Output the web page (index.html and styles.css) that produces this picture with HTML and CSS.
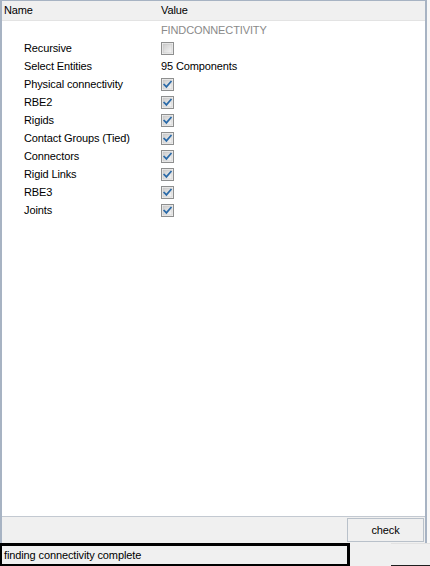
FILE: index.html
```html
<!DOCTYPE html>
<html lang="en">
<head>
    <meta charset="UTF-8">
    <title>Find Connectivity</title>
    <link rel="stylesheet" href="styles.css">
</head>
<body>
<svg class="defs" width="0" height="0">
    <defs>
        <linearGradient id="boxfill" x1="0" y1="0" x2="1" y2="1">
            <stop offset="0" stop-color="#cbcbcb"></stop>
            <stop offset="1" stop-color="#f7f7f7"></stop>
        </linearGradient>
        <symbol id="box" viewBox="0 0 13 13">
            <rect x="0.5" y="0.5" width="12" height="12" fill="#f4f4f4" stroke="#8e8f8f"></rect>
            <rect x="2" y="2" width="9" height="9" fill="url(#boxfill)" stroke="#c4c4c4" stroke-width="0.6"></rect>
        </symbol>
        <symbol id="checked" viewBox="0 0 13 13">
            <use href="#box"></use>
            <path d="M3.2,6.6 L5.4,8.9 L9.9,3.6" fill="none" stroke="#2a6aa8" stroke-width="1.7" stroke-linecap="square"></path>
        </symbol>
    </defs>
</svg>
<div class="panel">
    <div class="grid">
        <div class="row head">
            <span class="name">Name</span>
            <span class="value">Value</span>
        </div>
        <div class="row">
            <span class="name"></span>
            <span class="value muted">FINDCONNECTIVITY</span>
        </div>
        <div class="row">
            <span class="name">Recursive</span>
            <span class="value"><svg class="check"><use href="#box"></use></svg></span>
        </div>
        <div class="row">
            <span class="name">Select Entities</span>
            <span class="value">95 Components</span>
        </div>
        <div class="row">
            <span class="name">Physical connectivity</span>
            <span class="value"><svg class="check"><use href="#checked"></use></svg></span>
        </div>
        <div class="row">
            <span class="name">RBE2</span>
            <span class="value"><svg class="check"><use href="#checked"></use></svg></span>
        </div>
        <div class="row">
            <span class="name">Rigids</span>
            <span class="value"><svg class="check"><use href="#checked"></use></svg></span>
        </div>
        <div class="row">
            <span class="name">Contact Groups (Tied)</span>
            <span class="value"><svg class="check"><use href="#checked"></use></svg></span>
        </div>
        <div class="row">
            <span class="name">Connectors</span>
            <span class="value"><svg class="check"><use href="#checked"></use></svg></span>
        </div>
        <div class="row">
            <span class="name">Rigid Links</span>
            <span class="value"><svg class="check"><use href="#checked"></use></svg></span>
        </div>
        <div class="row">
            <span class="name">RBE3</span>
            <span class="value"><svg class="check"><use href="#checked"></use></svg></span>
        </div>
        <div class="row">
            <span class="name">Joints</span>
            <span class="value"><svg class="check"><use href="#checked"></use></svg></span>
        </div>
    </div>
    <div class="footer">
        <button class="btn">check</button>
    </div>
</div>
<div class="status">
    <div class="status_text">finding connectivity complete</div>
    <div class="status_rest"></div>
</div>
</body>
</html>
```

FILE: styles.css
```css
html, body{
    margin: 0;
    padding: 0;
}
body{
    width: 430px;
    height: 566px;
    overflow: hidden;
    background-color: #f7f7f7;
    font-family: "Liberation Sans", Arial, sans-serif;
    font-size: 11px;
    letter-spacing: -0.12px;
    color: #000;
}
.defs{
    position: absolute;
}
.panel{
    width: 423px;
    height: 542px;
    border-top: 1px solid #a7b3c3;
    border-left: 2px solid #a7b3c3;
    border-right: 2px solid #a7b3c3;
    display: flex;
    flex-direction: column;
}
.grid{
    flex: 1;
    background-color: #fff;
    border-bottom: 1px solid #c3c9d1;
}
.row{
    display: grid;
    grid-template-columns: 159px 1fr;
    height: 18px;
    line-height: 18px;
}
.row .name{
    padding-left: 22px;
}
.row.head{
    height: 19px;
    line-height: 19px;
    background-color: #f0f0f0;
    border-bottom: 1px solid #e3e3e3;
}
.row.head .name{
    padding-left: 2px;
}
.value{
    display: flex;
    align-items: center;
}
.muted{
    color: #8a8a8a;
}
.check{
    width: 13px;
    height: 13px;
}
.footer{
    height: 25px;
    background-color: #f0f0f0;
    display: flex;
    justify-content: flex-end;
    align-items: flex-start;
    padding-top: 1px;
    padding-right: 1px;
}
.btn{
    all: unset;
    box-sizing: border-box;
    width: 77px;
    height: 24px;
    border: 1px solid #b9c1ca;
    background-color: #f0f0f0;
    text-align: center;
    line-height: 22px;
    font-family: "Liberation Sans", Arial, sans-serif;
    font-size: 11px;
    color: #000;
}
.status{
    display: flex;
    height: 23px;
    background-color: #f0f0f0;
}
.status_text{
    box-sizing: border-box;
    width: 350px;
    height: 24px;
    border: 3px solid #000;
    border-left-width: 2px;
    padding-left: 2px;
    line-height: 18px;
}
.status_rest{
    flex: 1;
    border-top: 1px solid #e2e2e2;
    border-bottom: 2px solid #1e1e1e;
    margin-left: 41px;
    box-sizing: border-box;
    height: 24px;
}
```
